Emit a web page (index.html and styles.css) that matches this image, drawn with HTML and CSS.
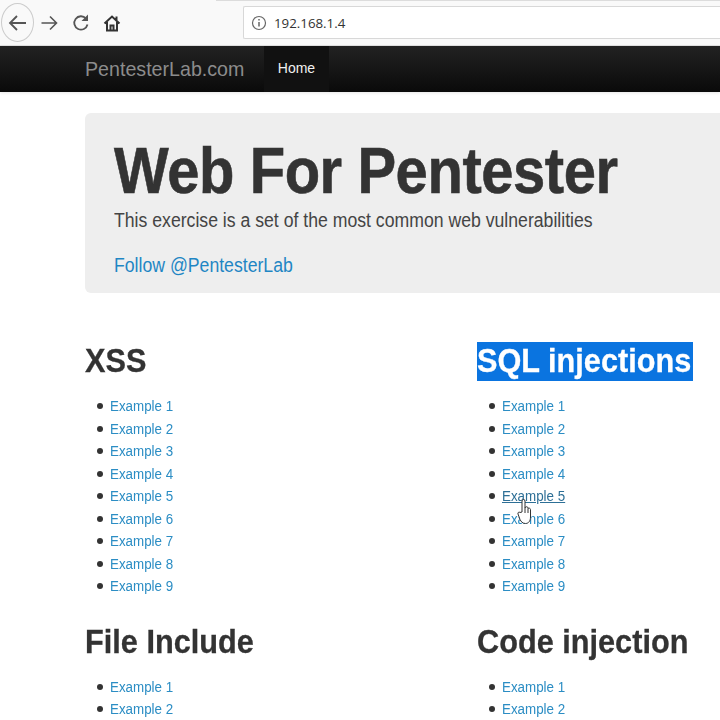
FILE: index.html
```html
<!DOCTYPE html>
<html lang="en">
<head>
<meta charset="utf-8">
<title>Web For Pentester</title>
<link rel="stylesheet" href="styles.css">
</head>
<body>
<header class="chrome">
  <span class="back">
    <svg width="26" height="26" viewBox="0 0 26 26" fill="none" stroke="#555" stroke-width="1.8"><path d="M21 13H5M12 6 5 13l7 7"/></svg>
  </span>
  <svg class="fwd" width="20" height="20" viewBox="0 0 20 20" fill="none" stroke="#555" stroke-width="1.6"><path d="M2.500 10h15M11 3.500l6.500 6.500-6.500 6.500"/></svg>
  <svg class="reload" width="20" height="20" viewBox="0 0 20 20" fill="none" stroke="#555" stroke-width="1.8"><path d="M15 5.500A6.700 6.700 0 1 0 16.500 11.500"/><path d="M17 1.500V8h-6.500z" fill="#555" stroke="none"/></svg>
  <svg class="homeicon" width="18" height="18" viewBox="0 0 18 18" fill="none" stroke="#333" stroke-width="2"><path d="M1.500 9.500 9 2.500l7.500 7M4 8v8.500h10V8M7.500 16.500v-5h3v5M13.500 2.500v3.500"/></svg>
  <div class="address">
    <svg width="16" height="16" viewBox="0 0 16 16" fill="none" stroke="#666" stroke-width="1.200"><circle cx="8" cy="8" r="6.500"/><path d="M8 7v4.500M8 4v1.500" stroke-width="1.500"/></svg>
    <span class="url">192.168.1.4</span>
  </div>
</header>
<nav class="navbar">
  <span class="brand"><span class="squeeze-brand">PentesterLab.com</span></span>
  <span class="navitem">Home</span>
</nav>
<main class="content">
  <section class="hero">
    <h1><span class="squeeze-h1">Web For Pentester</span></h1>
    <p class="lead"><span class="squeeze-lead">This exercise is a set of the most common web vulnerabilities</span></p>
    <a class="follow" href="#"><span class="squeeze-lead">Follow @PentesterLab</span></a>
  </section>
  <div class="columns">
    <section class="group">
      <h2><span class="squeeze-h2">XSS</span></h2>
      <ul>
        <li><a href="#">Example 1</a></li>
        <li><a href="#">Example 2</a></li>
        <li><a href="#">Example 3</a></li>
        <li><a href="#">Example 4</a></li>
        <li><a href="#">Example 5</a></li>
        <li><a href="#">Example 6</a></li>
        <li><a href="#">Example 7</a></li>
        <li><a href="#">Example 8</a></li>
        <li><a href="#">Example 9</a></li>
      </ul>
    </section>
    <section class="group">
      <h2><span class="selected"><span class="squeeze-h2">SQL injections</span></span></h2>
      <ul>
        <li><a href="#">Example 1</a></li>
        <li><a href="#">Example 2</a></li>
        <li><a href="#">Example 3</a></li>
        <li><a href="#">Example 4</a></li>
        <li class="hovered"><a href="#">Example 5</a>
          <svg class="cursor" width="16" height="27" viewBox="0 0 16 27" fill="#fff" stroke="#333" stroke-width="1"><path d="M5 14V3a1.500 1.500 0 0 1 3 0v7a1.500 1.500 0 0 1 3 .5 1.500 1.500 0 0 1 2.500 1V19c0 4-2 6.500-5 6.500-3 0-4.500-2-5.500-4L1 16c-.5-1.500 1-2.500 2-1.500z"/><path d="M8 10v5M11 10.500V15" fill="none"/></svg>
        </li>
        <li><a href="#">Example 6</a></li>
        <li><a href="#">Example 7</a></li>
        <li><a href="#">Example 8</a></li>
        <li><a href="#">Example 9</a></li>
      </ul>
    </section>
    <section class="group">
      <h2><span class="squeeze-h2">File Include</span></h2>
      <ul>
        <li><a href="#">Example 1</a></li>
        <li><a href="#">Example 2</a></li>
      </ul>
    </section>
    <section class="group">
      <h2><span class="squeeze-h2">Code injection</span></h2>
      <ul>
        <li><a href="#">Example 1</a></li>
        <li><a href="#">Example 2</a></li>
      </ul>
    </section>
  </div>
</main>
</body>
</html>
```
FILE: styles.css
```css
html, body { margin: 0; padding: 0; height: 720px; overflow: hidden; background: #fff; }
body { font-family: "Liberation Sans", Arial, sans-serif; color: #333; }

.chrome {
  height: 46px;
  box-sizing: border-box;
  display: flex;
  align-items: center;
  background: linear-gradient(#dcdcdc, #dcdcdc) no-repeat 216px 0 / 100% 1px, #f9f9f9;
  border-bottom: 1px solid #e2e2e2;
  padding-left: 1px;
}
.back {
  width: 31px;
  height: 37px;
  border: 1px solid #ccc;
  border-radius: 50%;
  display: flex;
  align-items: center;
  justify-content: center;
  flex: none;
}
.fwd { margin-left: 5px; }
.reload { margin-left: 12px; }
.homeicon { margin-left: 12px; }
.address {
  margin-left: 122px;
  flex: 1;
  height: 33px;
  box-sizing: border-box;
  background: #fff;
  border: 1px solid #d8d8d8;
  border-right: 0;
  border-radius: 2px 0 0 2px;
  display: flex;
  align-items: center;
  gap: 7px;
  padding-left: 7px;
}
.url { font-family: "Open Sans", sans-serif; font-size: 13.300px; color: #333; }

.navbar {
  height: 46px;
  box-sizing: border-box;
  display: flex;
  align-items: stretch;
  padding-left: 85px;
  background: linear-gradient(#222, #0a0a0a);
  box-shadow: 0 1px 3px rgba(0, 0, 0, 0.1);
}
.brand { font-size: 21px; color: #8c8c8c; line-height: 45px; width: 179px; white-space: nowrap; }
.squeeze-brand { display: inline-block; transform: scaleX(0.935); transform-origin: left; }
.navitem {
  width: 65px;
  text-align: center;
  background: #111;
  color: #f0f0f0;
  font-size: 14px;
  line-height: 45px;
}

.content { padding: 21px 0 0 85px; filter: blur(0.35px); }
.hero {
  height: 180px;
  box-sizing: border-box;
  background: #eee;
  border-radius: 6px 0 0 6px;
  padding: 25px 0 0 29px;
}
h1 {
  margin: 0;
  font-size: 65px;
  line-height: 65px;
  letter-spacing: -0.5px;
  font-weight: 700;
  color: #333;
  white-space: nowrap;
  -webkit-text-stroke: 0.6px #333;
}
.squeeze-h1 { display: inline-block; transform: scaleX(0.892); transform-origin: left; }
.squeeze-lead { display: inline-block; transform: scaleX(0.905); transform-origin: left; white-space: nowrap; }
.lead { margin: 3px 0 0; font-size: 19.500px; line-height: 28px; color: #444; }
.follow { display: block; margin-top: 17px; font-size: 19.500px; line-height: 28px; color: #1f86c4; text-decoration: none; }

.columns {
  display: grid;
  grid-template-columns: 392px 1fr;
  margin-top: 47px;
  row-gap: 23px;
}
h2 { display: flow-root; margin: 0; height: 41px; font-size: 33px; line-height: 41px; font-weight: 700; color: #333; white-space: nowrap; -webkit-text-stroke: 0.3px currentColor; }
.squeeze-h2 { display: inline-block; transform: scaleX(0.93); transform-origin: left; }
.selected { background: #0a74e0; color: #fff; display: block; width: 216px; height: 39px; margin-top: 2px; line-height: 37px; overflow: hidden; }
ul { margin: 14px 0 0; padding: 0 0 0 12px; list-style: none; }
li { display: flex; align-items: center; gap: 7px; font-size: 14px; line-height: 22.500px; color: #333; }
li::before { content: ""; width: 6px; height: 6px; border-radius: 50%; background: #333; flex: none; }
li a { color: #2b8dc4; text-decoration: none; display: inline-block; transform: scaleX(0.955); transform-origin: left; }
.hovered { position: relative; z-index: 1; }
.hovered a { color: #2d6f96; text-decoration: underline; }
.cursor { position: absolute; left: 28px; top: 13px; }
```
